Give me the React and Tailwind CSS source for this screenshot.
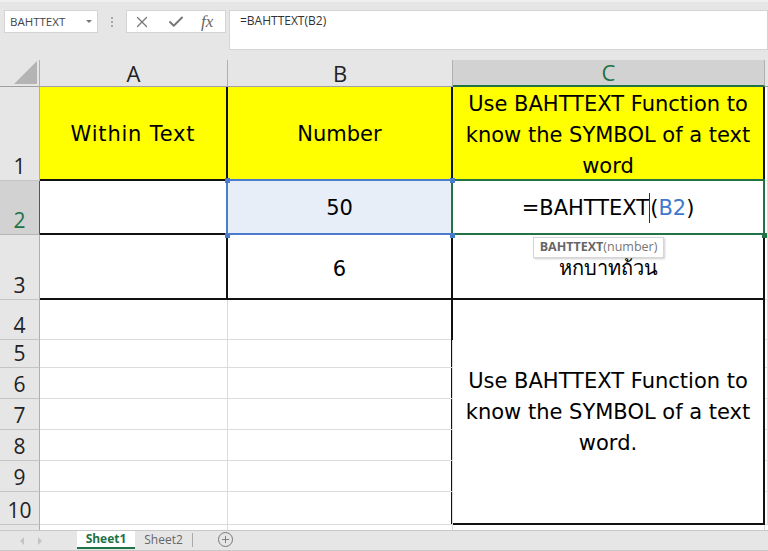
import { X, Check, Plus } from 'lucide-react'

const COLS = ['A', 'B', 'C']

// row header label sits at the bottom of its row
function RowHead({ n, active }) {
  return (
    <div
      className={`flex items-end justify-center pb-[2px] border-r border-b text-[21px] leading-[24px] ${
        active
          ? 'bg-[#d2d2d2] border-r-[#217346] border-b-[#b5b5b5] text-[#217346]'
          : 'bg-[#e6e6e6] border-r-[#b0b0b0] border-b-[#c4c4c4] text-[#222]'
      }`}
    >
      {n}
    </div>
  )
}

function Grid() {
  return <div className="border-r border-b border-[#dcdcdc]" />
}

const CELL = "flex items-center justify-center text-center font-['DejaVu_Sans'] leading-[31px] text-black"

function Handle({ className }) {
  return <div className={`absolute w-[5px] h-[5px] ${className}`} />
}

function Toolbar() {
  return (
    <div className="h-[60px] flex items-start pt-[8px] pl-[4px] border-t-2 border-t-[#f0f0f0]">
      <div className="w-[94px] h-[23px] bg-white border border-[#d4d4d4] flex items-center justify-between pl-[5px] pr-[5px] text-[11.5px] text-[#444]">
        <span>BAHTTEXT</span>
        <span className="w-0 h-0 border-x-[3px] border-x-transparent border-t-[3px] border-t-[#777]" />
      </div>
      <div className="w-[28px] h-[23px] flex flex-col items-center justify-center gap-[2px]">
        <span className="w-[2px] h-[2px] bg-[#a8a8a8]" />
        <span className="w-[2px] h-[2px] bg-[#a8a8a8]" />
        <span className="w-[2px] h-[2px] bg-[#a8a8a8]" />
      </div>
      <div className="w-[100px] h-[23px] bg-white border border-[#d4d4d4] flex items-center gap-[16px] pl-[6px] text-[#777]">
        <X size={18} strokeWidth={1.6} />
        <Check size={18} strokeWidth={2.6} />
        <span className="font-['Liberation_Serif'] italic text-[17px] leading-none text-[#666]">fx</span>
      </div>
      <div className="ml-[3px] flex-1 h-[40px] bg-white border border-[#d4d4d4] pl-[10px] pt-[2px] text-[12px] leading-[16px] text-[#333]">
        =BAHTTEXT(B2)
      </div>
    </div>
  )
}

function Sheet() {
  return (
    <div className="relative h-[470px] grid grid-cols-[40px_188px_225px_312px_3px] grid-rows-[27px_94px_54px_65px_40px_28px_31px_31px_31px_31px_33px_5px] bg-white">
      {/* header row */}
      <div className="bg-[#e6e6e6] border-r border-b border-r-[#b0b0b0] border-b-[#a0a0a0] flex items-end justify-end pr-[2px] pb-[2px]">
        <svg width="23" height="23" viewBox="0 0 23 23"><polygon points="23,0 23,23 0,23" fill="#b4b4b4" /></svg>
      </div>
      {COLS.map(c => (
        <div
          key={c}
          className={`flex items-center justify-center border-r text-[22px] ${
            c === 'C'
              ? 'bg-[#d2d2d2] text-[#217346] border-b-2 border-b-[#217346] border-r-[#b0b0b0]'
              : 'bg-[#e6e6e6] text-[#222] border-b border-b-[#a0a0a0] border-r-[#b0b0b0]'
          }`}
        >
          {c}
        </div>
      ))}
      <div className="bg-[#e6e6e6] border-b border-b-[#a0a0a0]" />

      {/* row 1 */}
      <RowHead n={1} />
      <div className={`${CELL} text-[21px] pt-[2px] bg-[#ffff00] border-r-2 border-b-2 border-[#111] tracking-[0.8px]`}>Within Text</div>
      <div className={`${CELL} text-[21px] pt-[2px] bg-[#ffff00] border-r-2 border-b-2 border-[#111]`}>Number</div>
      <div className={`${CELL} text-[21px] pt-[4px] bg-[#ffff00] border-r-2 border-b-2 border-[#111] px-[4px]`}>
        Use BAHTTEXT Function to know the SYMBOL of a text word
      </div>
      <Grid />

      {/* row 2 */}
      <RowHead n={2} active />
      <div className={`${CELL} border-r-2 border-b-2 border-[#111]`} />
      <div className={`${CELL} text-[21px] pt-[2px] bg-[#e8eef8] border-2 border-[#4a7ccb] -mt-[2px] -ml-[2px]`}>50</div>
      <div className={`${CELL} text-[21px] pt-[2px] border-2 border-[#217346] -mt-[2px] -ml-[2px]`}>
        =BAHTTEXT<span className="inline-block w-px h-[30px] bg-[#333]" />(<span className="text-[#3f78cc]">B2</span>)
      </div>
      <Grid />

      {/* row 3 */}
      <RowHead n={3} />
      <div className={`${CELL} border-r-2 border-b-2 border-[#111]`} />
      <div className={`${CELL} text-[21px] pt-[5px] border-r-2 border-b-2 border-[#111]`}>6</div>
      <div className={`${CELL} text-[20px] pt-[4px] border-r-2 border-b-2 border-[#111]`}>หกบาทถ้วน</div>
      <Grid />

      {/* rows 4-10, C is merged */}
      <RowHead n={4} /><Grid /><Grid />
      <div className={`${CELL} text-[21px] pt-[2px] row-span-7 border-2 border-t-0 border-[#111] -ml-[2px] px-[4px]`}>
        Use BAHTTEXT Function to know the SYMBOL of a text word.
      </div>
      <Grid />
      {[5, 6, 7, 8, 9, 10].map(n => (
        <div key={n} className="contents">
          <RowHead n={n} /><Grid /><Grid /><Grid />
        </div>
      ))}

      {/* cut off row 11 */}
      <div className="bg-[#e6e6e6] border-r border-r-[#b0b0b0]" />
      <div className="border-r border-[#dcdcdc]" />
      <div className="border-r border-[#dcdcdc]" />
      <div className="border-r border-[#dcdcdc]" />
      <div />

      {/* selection handles */}
      <Handle className="left-[225px] top-[118px] bg-[#4a7ccb]" />
      <Handle className="left-[450px] top-[118px] bg-[#4a7ccb]" />
      <Handle className="left-[225px] top-[173px] bg-[#4a7ccb]" />
      <Handle className="left-[450px] top-[173px] bg-[#4a7ccb]" />
      <Handle className="left-[762px] top-[173px] bg-[#217346]" />

      {/* function tooltip */}
      <div className="absolute left-[533px] top-[177px] w-[131px] h-[21px] bg-white border border-[#d6d6d6] shadow-[1px_1px_2px_rgba(0,0,0,0.2)] flex items-center justify-center text-[12.5px] text-[#777]">
        <b className="font-bold text-[#666]">BAHTTEXT</b>(number)
      </div>
    </div>
  )
}

function Tabs() {
  return (
    <div className="h-[21px] flex items-start bg-[#e6e6e6] border-t border-b border-[#c8c8c8] text-[12px]">
      <div className="w-[77px] h-full flex items-center gap-[14px] pl-[20px] text-[#bbb]">
        <span className="w-0 h-0 border-y-[4px] border-y-transparent border-r-[4px] border-r-[#c4c4c4]" />
        <span className="w-0 h-0 border-y-[4px] border-y-transparent border-l-[4px] border-l-[#c4c4c4]" />
      </div>
      <div className="w-[58px] h-[18px] bg-white border-b-2 border-[#217346] flex items-center justify-center font-bold text-[#217346]">Sheet1</div>
      <div className="w-[57px] h-[18px] flex items-center justify-center text-[#666]">Sheet2</div>
      <div className="w-px h-[14px] mt-[2px] bg-[#aaa]" />
      <div className="ml-[25px] mt-[1px] w-[15px] h-[15px] rounded-full border border-[#777] flex items-center justify-center text-[#777]">
        <Plus size={11} strokeWidth={2} />
      </div>
    </div>
  )
}

export default function App() {
  return (
    <div className="w-[768px] h-[551px] overflow-hidden flex flex-col bg-[#e6e6e6] font-['Open_Sans',sans-serif]">
      <Toolbar />
      <Sheet />
      <Tabs />
    </div>
  )
}
